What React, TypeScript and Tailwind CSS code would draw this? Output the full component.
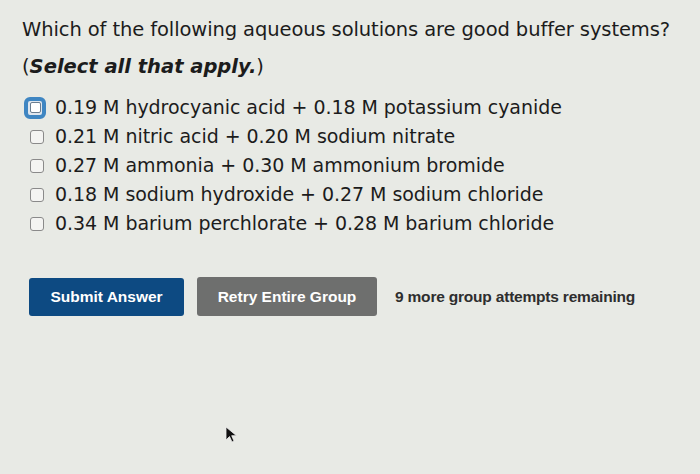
import React, { useState } from 'react';

const choices = [
  '0.19 M hydrocyanic acid + 0.18 M potassium cyanide',
  '0.21 M nitric acid + 0.20 M sodium nitrate',
  '0.27 M ammonia + 0.30 M ammonium bromide',
  '0.18 M sodium hydroxide + 0.27 M sodium chloride',
  '0.34 M barium perchlorate + 0.28 M barium chloride',
];

export default function App() {
  const [checked, setChecked] = useState<boolean[]>(choices.map(() => false));
  const [focused, setFocused] = useState(0);

  const toggle = (i: number) => {
    setFocused(i);
    setChecked(c => c.map((v, j) => (j === i ? !v : v)));
  };

  return (
    <div className="relative w-[700px] h-[474px] overflow-hidden bg-[#e8eae5] text-[#1c1c1c] font-['DejaVu_Sans',Verdana,sans-serif]">
      <div className="pl-[22px] pt-[17px]">
        <h2 className="text-[19.5px] leading-[26px] tracking-[-0.1px]">
          Which of the following aqueous solutions are good buffer systems?
        </h2>
        <p className="mt-[11px] text-[19.5px] leading-[26px]">
          (<span className="font-bold italic">Select all that apply.</span>)
        </p>

        <div className="mt-[13px] flex flex-col">
          {choices.map((c, i) => (
            <label
              key={i}
              onClick={() => toggle(i)}
              className="flex items-center h-[29px] cursor-pointer text-[19px] tracking-[-0.05px]"
            >
              <span className="w-[30px] flex justify-center">
                {focused === i ? (
                  <span className="-ml-[4px] w-[22px] h-[22px] rounded-[6px] border-[4px] border-[#3f86c2] bg-[#dfe6ee] flex items-center justify-center">
                    <span className="w-[11px] h-[11px] rounded-[2px] border border-[#6a7d90] bg-white">
                      {checked[i] && <span className="block w-full h-full bg-[#2f6fa8]" />}
                    </span>
                  </span>
                ) : (
                  <span className="w-[14px] h-[14px] rounded-[3px] border border-[#8a8a8a] bg-[#f4f4f2]">
                    {checked[i] && <span className="block w-full h-full bg-[#2f6fa8]" />}
                  </span>
                )}
              </span>
              <span className="ml-[3px]">{c}</span>
            </label>
          ))}
        </div>

        <div className="mt-[39px] flex items-center font-['Liberation_Sans',Arial,sans-serif] font-bold">
          <button className="ml-[7px] w-[155px] h-[38px] rounded-[3px] bg-[#0d4a82] text-white text-[15.5px]">
            Submit Answer
          </button>
          <button className="ml-[13px] w-[180px] h-[39px] rounded-[3px] bg-[#6e6f6e] text-white text-[15.5px]">
            Retry Entire Group
          </button>
          <span className="ml-[18px] text-[15.5px] text-[#2e2e2e] tracking-[-0.2px]">
            9 more group attempts remaining
          </span>
        </div>
      </div>

      {/* mouse pointer */}
      <svg className="absolute left-[225px] top-[426px]" width="14" height="18" viewBox="0 0 14 18">
        <path d="M1 1 L1 14 L4.5 10.5 L7 16 L9 15 L6.7 9.7 L11.5 9.7 Z" fill="#111" stroke="#eee" strokeWidth="0.8" />
      </svg>
    </div>
  );
}
